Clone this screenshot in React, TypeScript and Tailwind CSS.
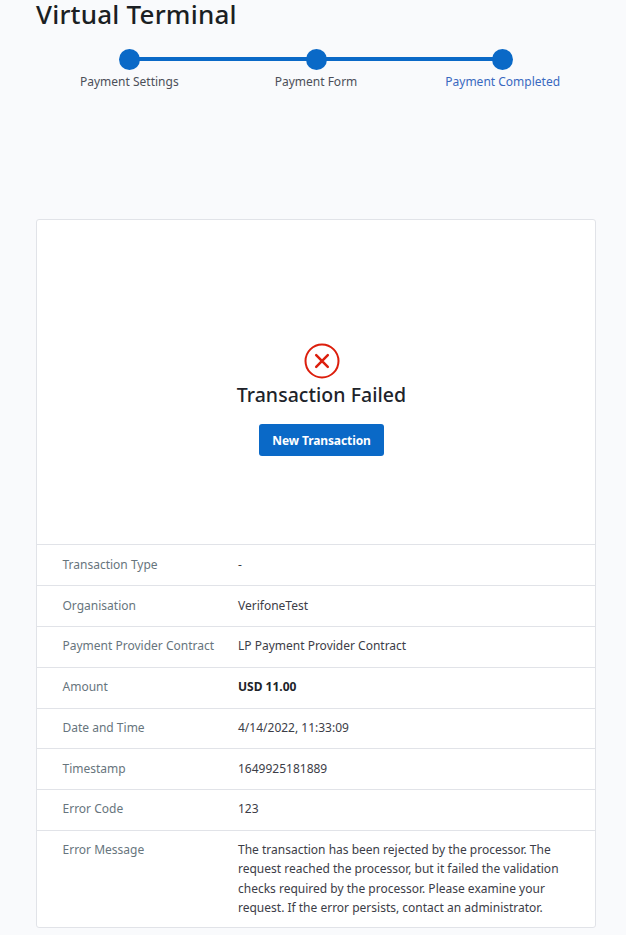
const steps = ["Payment Settings", "Payment Form", "Payment Completed"];

const rows = [
  { label: "Transaction Type", value: "-" },
  { label: "Organisation", value: "VerifoneTest" },
  { label: "Payment Provider Contract", value: "LP Payment Provider Contract" },
  { label: "Amount", value: "USD 11.00", bold: true },
  { label: "Date and Time", value: "4/14/2022, 11:33:09" },
  { label: "Timestamp", value: "1649925181889" },
  { label: "Error Code", value: "123" },
];

const errorMessage = [
  "The transaction has been rejected by the processor. The",
  "request reached the processor, but it failed the validation",
  "checks required by the processor. Please examine your",
  "request. If the error persists, contact an administrator.",
];

function Stepper() {
  return (
    <div className="mt-[17px] grid grid-cols-3">
      {steps.map((step, index) => (
        <div key={step} className="flex flex-col items-center">
          <div className="flex w-full items-start">
            <div className={index === 0 ? "mt-2 h-1 flex-1" : "mt-2 h-1 flex-1 bg-[#0a69c7]"} />
            <div className="-mx-px size-[21px] rounded-full bg-[#0a69c7]" />
            <div className={index === 2 ? "mt-2 h-1 flex-1" : "mt-2 h-1 flex-1 bg-[#0a69c7]"} />
          </div>
          <span className={index === 2 ? "mt-[3px] text-xs leading-[18px] text-[#3969c0]" : "mt-[3px] text-xs leading-[18px] text-[#4c4f58]"}>
            {step}
          </span>
        </div>
      ))}
    </div>
  );
}

export default function App() {
  return (
    <div className="h-[935px] overflow-hidden bg-[#f9fafc] pr-[30px] pl-9 font-['Noto_Sans',sans-serif] text-[#3c3d47]">
      <h1 className="-mt-1 text-[26px] leading-[36px] font-medium tracking-[0.2px] text-[#1b1f23]">Virtual Terminal</h1>
      <Stepper />

      <div className="mt-[128px] h-[709px] rounded-[3px] border border-[#e1e3e8] bg-white">
        <div className="flex h-[324.4px] flex-col items-center pt-[123px] pl-[11px]">
          <svg width="36" height="36" viewBox="0 0 36 36" fill="none" stroke="#dc1e0c">
            <circle cx="18" cy="18" r="16.5" strokeWidth="2" />
            <path d="M12.2 12.2 23.8 23.8M23.8 12.2 12.2 23.8" strokeWidth="2.5" strokeLinecap="round" />
          </svg>
          <h2 className="mt-[2px] text-[19.5px] leading-[28px] font-medium tracking-[0.05px] text-[#20232a]">Transaction Failed</h2>
          <button className="mt-[15px] h-8 w-[125px] rounded-[3px] bg-[#0a69c7] pt-px text-xs font-bold tracking-[-0.1px] text-white">
            New Transaction
          </button>
        </div>

        <dl className="text-xs leading-[19.5px]">
          {rows.map((row) => (
            <div key={row.label} className="flex h-[40.8px] border-t border-[#e1e3e8] pt-[9.32px] pl-[25.5px]">
              <dt className="w-[175.5px] text-[#67757d]">{row.label}</dt>
              <dd className={row.bold ? "font-bold text-[#20232a]" : ""}>{row.value}</dd>
            </div>
          ))}
          <div className="flex border-t border-[#e1e3e8] pt-[8.6px] pl-[25.5px]">
            <dt className="w-[175.5px] text-[#67757d]">Error Message</dt>
            <dd>
              {errorMessage.map((line) => (
                <p key={line} className="whitespace-nowrap">{line}</p>
              ))}
            </dd>
          </div>
        </dl>
      </div>
    </div>
  );
}
